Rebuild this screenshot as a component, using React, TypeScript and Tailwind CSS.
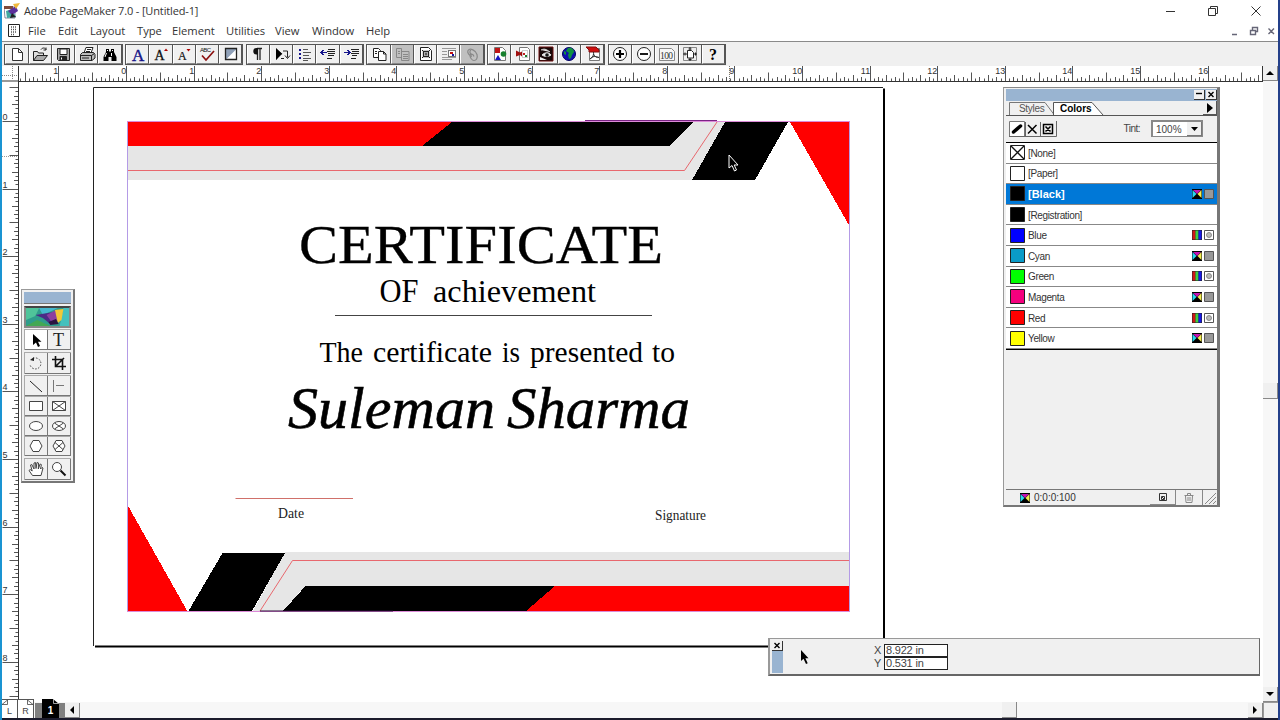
import type { ReactNode } from "react";

const INCH = 67.6;

const MENUS = [
  { label: "File", w: "w-[30px]" },
  { label: "Edit", w: "w-[32px]" },
  { label: "Layout", w: "w-[47px]" },
  { label: "Type", w: "w-[35px]" },
  { label: "Element", w: "w-[54px]" },
  { label: "Utilities", w: "w-[49px]" },
  { label: "View", w: "w-[37px]" },
  { label: "Window", w: "w-[54px]" },
  { label: "Help", w: "w-[40px]" },
];

type Swatch = { name: string; fill: string; model?: "rgb" | "cmyk"; selected?: boolean };

const SWATCHES: Swatch[] = [
  { name: "[None]", fill: "none" },
  { name: "[Paper]", fill: "#ffffff" },
  { name: "[Black]", fill: "#000000", model: "cmyk", selected: true },
  { name: "[Registration]", fill: "#000000" },
  { name: "Blue", fill: "#0000ff", model: "rgb" },
  { name: "Cyan", fill: "#0a9bc8", model: "cmyk" },
  { name: "Green", fill: "#00ff00", model: "rgb" },
  { name: "Magenta", fill: "#f5007d", model: "cmyk" },
  { name: "Red", fill: "#ff0000", model: "rgb" },
  { name: "Yellow", fill: "#ffff00", model: "cmyk" },
];

function Icon({ children, crisp = false }: { children: ReactNode; crisp?: boolean }) {
  return (
    <svg width="18" height="18" viewBox="0 0 18 18" className="shrink-0" fill="none" stroke="#222" strokeWidth="1" shapeRendering={crisp ? "crispEdges" : "auto"}>
      {children}
    </svg>
  );
}

const serif = { fontFamily: "Liberation Serif, serif" };

const TOOLBAR: { icon: ReactNode; off?: boolean }[][] = [
  [
    { icon: <Icon><path d="M4.5 3.5h6l4 4v8h-10zM10.5 3.5v4h4" fill="#fff" stroke="#333" /></Icon> },
    {
      icon: (
        <Icon>
          <path d="M2.5 15.5v-9h4l1 1.500h5v2.500" fill="#ddd" />
          <path d="M2.500 15.500l3.500-5h10.500l-4 5z" fill="#aaa" />
          <path d="M10 4.500c1.500-2 4-2 5 0m0-2v2.500h-2.500" />
        </Icon>
      ),
    },
    {
      icon: (
        <Icon>
          <path d="M3.500 3.500h12v12h-11l-1-1z" fill="#aaa" />
          <path d="M6 4h7v5.500H6z" fill="#fff" />
          <path d="M6 11.500h6.500v4H6z" fill="#222" />
          <path d="M7.500 12.500v2" stroke="#fff" />
        </Icon>
      ),
    },
    {
      icon: (
        <Icon>
          <path d="M6 8l2-5.500h7L13 8" fill="#fff" />
          <path d="M2.500 9.500l2-2h11l1.500 2v3.500l-3 2.500h-11.500z" fill="#bbb" />
          <path d="M2.500 10.500h11v5M13.500 10.500l3-2M4 13h7M9 4.500h4M8 6.500h4" />
        </Icon>
      ),
    },
    {
      icon: (
        <Icon>
          <path d="M5 4h3v2l1 1 1-1V4h3v3l2.500 5v4h-5v-4h-3v4h-5v-4L5 7z" fill="#000" stroke="none" />
          <path d="M5.500 8l-1.500 4M10.500 8v3M6 5.500h1M11 5.500h1" stroke="#fff" />
        </Icon>
      ),
    },
  ],
  [
    { icon: <Icon><text x="3" y="15.500" fontSize="17" fill="#141488" stroke="#141488" strokeWidth=".4" style={serif}>A</text></Icon> },
    { icon: <Icon><text x="2.500" y="15" fontSize="14" fill="#111" stroke="#111" strokeWidth=".3" style={serif}>A</text><path d="M12 6h4l-2-2.500z" fill="#a00" stroke="none" /></Icon> },
    { icon: <Icon><text x="3" y="15" fontSize="12" fill="#111" stroke="#111" strokeWidth=".2" style={serif}>A</text><path d="M11.500 4h4l-2 2.500z" fill="#a00" stroke="none" /></Icon> },
    {
      icon: (
        <Icon>
          <text x="2" y="6.500" fontSize="6" fill="#111" stroke="none" textLength="11" style={{ fontFamily: "Liberation Sans, sans-serif" }}>ABC</text>
          <path d="M4 10.500l4 4.500 8-9" stroke="#8b1010" strokeWidth="1.700" />
        </Icon>
      ),
    },
    {
      icon: (
        <Icon>
          <path d="M3.500 3.500h11v11h-11z" fill="#fff" />
          <path d="M4 4h10.500L4 14.500z" fill="#8fa0b8" stroke="none" />
          <path d="M3.500 3.500h11v11h-11z" strokeWidth="1.300" />
        </Icon>
      ),
    },
  ],
  [
    { icon: <Icon><path d="M8.500 3v12M11 3v12M8 3.500h5" strokeWidth="1.300" /><path d="M9 3H7.500a3.200 3.200 0 0 0 0 6.400H9z" fill="#111" stroke="none" /></Icon> },
    {
      icon: (
        <Icon>
          <path d="M3 3.500v11.500l1.500-2V10l5-1z" fill="#000" stroke="none" />
          <path d="M3 3v12l6-6z" fill="#000" stroke="none" />
          <path d="M10 6h4.500v6.500M12 10.500l2.500 3 2.500-3M8 13.500h3" />
        </Icon>
      ),
    },
    {
      icon: (
        <Icon crisp>
          <path d="M7 4.500h5M7 7.500h8M7 10.500h6M7 13.500h8M7 15.500h5" stroke="#555" />
          <path d="M3 4.500h2M3 8.500h2M3 12.500h2" stroke="#14148c" strokeWidth="2" />
        </Icon>
      ),
    },
    {
      icon: (
        <Icon crisp>
          <path d="M9 4.500h7M8 6.500h8M9 8.500h7M9 10.500h6M8 13.500h5" stroke="#222" />
          <path d="M8 7.500H2M5 5L2 7.500 5 10" stroke="#14148c" strokeWidth="1.300" />
        </Icon>
      ),
    },
    {
      icon: (
        <Icon crisp>
          <path d="M9 4.500h8M10 6.500h7M9 8.500h8M10 10.500h5M9 13.500h5" stroke="#222" />
          <path d="M2 7.500h6M5 5l3 2.500L5 10" stroke="#14148c" strokeWidth="1.300" />
        </Icon>
      ),
    },
  ],
  [
    {
      icon: (
        <Icon>
          <path d="M3.500 3.500h5l2 2v7h-7z" fill="#fff" />
          <path d="M8.500 6.500h5l2.500 2.500v6.500h-7.500z" fill="#fff" />
          <path d="M5 6.500h2M5 8.500h2M13.500 6.500v2.500h2.500" />
        </Icon>
      ),
    },
    {
      off: true,
      icon: (
        <Icon>
          <path d="M3.500 3.500h5v9h-5zM8.500 6.500h7.500v9h-7.500z" stroke="#888" />
          <path d="M5 6.500h2M5 8.500h2M10 9.500h5M10 11.500h5M10 13.500h5" stroke="#888" />
        </Icon>
      ),
    },
    {
      icon: (
        <Icon>
          <path d="M3.500 2.500h8l3 3v10h-11z" fill="#fff" />
          <path d="M6.500 6.500h5v5h-5z" strokeWidth="1.300" />
          <path d="M5 5l1.500 1.500M13 5l-1.500 1.500M5 13l1.500-1.500M13 13l-1.500-1.500" />
          <circle cx="9" cy="9" r="1" />
        </Icon>
      ),
    },
    {
      icon: (
        <Icon crisp>
          <path d="M2 3.500h14M2 6.500h5M2 9.500h5M2 12.500h14M2 14.500h10" stroke="#999" />
          <path d="M8.500 5.500h7v6h-7z" fill="#fff" stroke="#777" />
          <path d="M10 7h3v2h-3z" fill="#c01010" stroke="none" />
          <path d="M12 9h2v2h-2z" fill="#1414a0" stroke="none" />
        </Icon>
      ),
    },
    {
      off: true,
      icon: (
        <Icon>
          <path d="M5 5.500c2-3 8 0 9 4s-1 6-3 6-4-3-4-5 3-2 4 1M5 5.500c-1 2 1 5 4 6M8 5c-2 1-1 4 1 5" stroke="#888" strokeWidth="1.200" />
        </Icon>
      ),
    },
  ],
  [
    {
      icon: (
        <Icon>
          <path d="M3.500 2.500h8l3 3v10h-11z" fill="#fff" stroke="#777" />
          <path d="M4 3h5v5H4z" fill="#c01515" stroke="none" />
          <circle cx="12.500" cy="9" r="2.800" fill="#188030" stroke="none" />
          <path d="M4 15l3-5 3 5z" fill="#1515c0" stroke="none" />
        </Icon>
      ),
    },
    {
      icon: (
        <Icon>
          <path d="M5.500 2.500h8l2 2v11h-10z" fill="#fff" stroke="#777" />
          <path d="M2 5.500l4 2 2-1v5l-2-1.500-4 1.500z" fill="#a01010" stroke="none" />
          <path d="M9 8h2v2H9z" fill="#c02020" stroke="none" />
          <path d="M11 10h2v2h-2z" fill="#188030" stroke="none" />
          <path d="M8.500 5.500h5v7h-5z" stroke="#999" strokeDasharray="1 1" />
        </Icon>
      ),
    },
    {
      icon: (
        <Icon>
          <path d="M2 2h14v14H2z" fill="#180808" stroke="#6e1010" />
          <path d="M4 5c4-2 6 0 9 2M5 10c3-3 7-3 9 0-3 2-6 2-9 0z" stroke="#ddd" fill="#eee" />
          <circle cx="10" cy="10" r="1.800" fill="#111" stroke="none" />
          <path d="M3 12l7 3H3z" fill="#eee" stroke="none" />
        </Icon>
      ),
    },
    {
      icon: (
        <Icon>
          <circle cx="9" cy="9" r="6.500" fill="#1010b0" stroke="#000060" />
          <path d="M8 3c4-1 6 2 6 4l-2 3-1 3-2 1-1-4 1-2-3-2zM4 6l2 1v3l-2-1z" fill="#109040" stroke="none" />
        </Icon>
      ),
    },
    {
      icon: (
        <Icon>
          <path d="M5.500 3.500h10v12h-10z" fill="#fff" stroke="#777" />
          <path d="M2 2h10l3 3v2H5V5z" fill="#d01010" stroke="#801010" />
          <path d="M6 14c3-1 4-5 3.500-7M9.500 9c1 3 4 4 5.500 3.500M6 14c2-3 6-3 9-1.500" stroke="#333" />
        </Icon>
      ),
    },
  ],
  [
    { icon: <Icon><circle cx="9" cy="9" r="6.500" fill="#fff" /><path d="M9 5v8M5 9h8" stroke="#000" strokeWidth="2.200" /></Icon> },
    { icon: <Icon><circle cx="9" cy="9" r="6.500" fill="#fff" /><path d="M5 9h8" stroke="#000" strokeWidth="1.800" /></Icon> },
    {
      icon: (
        <Icon>
          <path d="M1.500 15.500v-12h12l3 3v9z" fill="#f7f7f7" stroke="#888" />
          <text x="2" y="13.500" fontSize="9.500" fill="#333" stroke="none" textLength="13" style={serif}>100</text>
        </Icon>
      ),
    },
    {
      icon: (
        <Icon>
          <path d="M2.500 2.500h13v13h-13z" fill="#eee" stroke="#888" />
          <path d="M6.500 5.500h4l2 2v5.500h-6z" fill="#fff" />
          <path d="M9 2v3M9 13v3M2 9h4M13 9h3M7.500 4h3M7.500 14.500h3M4 7.500v3M14.500 7.500v3" />
        </Icon>
      ),
    },
    { icon: <Icon><text x="5" y="15" fontSize="16" fontWeight="700" fill="#000" stroke="none" style={serif}>?</text></Icon> },
  ],
];

function Toolbar() {
  return (
    <div className="flex h-[25px] shrink-0 items-start gap-[2.4px] border-t border-[#8a8a8a] bg-[#f0f0f0] pt-[2px] pl-[2.300px]">
      {TOOLBAR.map((group, g) => (
        <div key={g} className="flex h-[21px] w-[118.3px] border border-[#555] bg-[#555]">
          {group.map((b, i) => (
            <div
              key={i}
              className={`flex min-w-0 flex-1 items-center justify-center overflow-hidden border-r border-b border-l border-r-[#555] border-b-[#888] border-l-white ${b.off ? "bg-[#c0c0c0]" : "bg-[#f0f0f0]"}`}
            >
              {b.icon}
            </div>
          ))}
        </div>
      ))}
    </div>
  );
}

// Tick length for the n-th sixteenth of an inch
function tickSize(n: number) {
  if (n % 16 === 0) return 16;
  if (n % 8 === 0) return 9;
  if (n % 4 === 0) return 6.5;
  if (n % 2 === 0) return 4.5;
  return 3;
}

function ticks(from: number, to: number, zero: number) {
  const out: { pos: number; n: number }[] = [];
  const step = INCH / 16;
  for (let n = Math.ceil((from - zero) / step); zero + n * step < to; n++) {
    out.push({ pos: Math.round(zero + n * step) + 0.5, n });
  }
  return out;
}

const rulerFont = { fontFamily: "Liberation Sans, sans-serif", fontSize: "9px" };

function TopRuler() {
  return (
    <svg className="shrink-0" width="1245" height="16" viewBox="18 66 1245 16">
      {ticks(20, 1262, 126).map(({ pos, n }) => (
        <path key={n} d={`M${pos} 81.500v-${tickSize(n)}`} stroke="#555" />
      ))}
      {ticks(20, 1262, 126)
        .filter(({ n }) => n % 16 === 0)
        .map(({ pos, n }) => (
          <text key={n} x={pos - 0.3} y="74" textAnchor="end" fill="#333" style={rulerFont}>{Math.abs(n / 16)}</text>
        ))}
      <path d="M18 81.500h1245M18.500 66v16M1262.500 66v16" stroke="#333" />
      <path d="M729.500 66v16" stroke="#777" strokeDasharray="1 1" />
    </svg>
  );
}

function SideRuler() {
  return (
    <svg className="shrink-0" width="17" height="620" viewBox="2 82 17 620">
      {ticks(84, 700, 121).map(({ pos, n }) => (
        <path key={n} d={`M18.500 ${pos}h-${tickSize(n)}`} stroke="#555" />
      ))}
      {ticks(84, 700, 121)
        .filter(({ n }) => n % 16 === 0)
        .map(({ pos, n }) => (
          <text key={n} x="2.500" y={pos - 1.5} fill="#333" style={rulerFont}>{Math.abs(n / 16)}</text>
        ))}
      <path d="M18.500 82v620" stroke="#333" />
      <path d="M2 156.500h16" stroke="#999" strokeDasharray="1 1" />
    </svg>
  );
}

function Certificate() {
  return (
    <svg width="1244" height="620" viewBox="19 82 1244 620" style={serif}>
      <path d="M93.500 646V87.500H883" fill="none" stroke="#222" />
      <path d="M95 646.500H884V88.500" fill="none" stroke="#000" strokeWidth="2" />
      <g shapeRendering="crispEdges">
        <path d="M127 146H670L693 122H725L692 180H127z" fill="#e6e6e6" />
        <path d="M127 122H452L422 146H127z" fill="#f00" />
        <path d="M452 122H693L670 146H422z" fill="#000" />
        <path d="M725 122H788L755 180H692z" fill="#000" />
        <path d="M790 122H850V227z" fill="#f00" />
        <path d="M127 504L187 610.500H127z" fill="#f00" />
        <path d="M285 552H850V586H305L283 611H253z" fill="#e6e6e6" />
        <path d="M222.500 553H285L252 611H188.500z" fill="#000" />
        <path d="M305.500 586H555L526 611H283z" fill="#000" />
        <path d="M555 586H850V611H526z" fill="#f00" />
      </g>
      <path d="M127 170.500H684.500L717 122" fill="none" stroke="#e8686e" />
      <path d="M850 560.500H292.500L260 611" fill="none" stroke="#e8686e" />
      <path d="M127.500 121V612M849.500 121V612" stroke="#b49be6" />
      <path d="M127 121.500H850M127 611.500H850" stroke="#dc8ad8" />
      <path d="M585 120.500H717" stroke="#7b2485" />
      <path d="M260 611H393" stroke="#2a0b38" />
      <text x="299" y="263" fontSize="54" textLength="364" lengthAdjust="spacingAndGlyphs" stroke="#000" strokeWidth=".3">CERTIFICATE</text>
      <text x="379.500" y="301.500" fontSize="33" textLength="39" lengthAdjust="spacingAndGlyphs">OF</text>
      <text x="433" y="301.500" fontSize="32" textLength="163" lengthAdjust="spacingAndGlyphs">achievement</text>
      <path d="M335 315.500H652" stroke="#444" />
      <g fontSize="29.500">
        <text x="319.500" y="362" textLength="43.500" lengthAdjust="spacingAndGlyphs">The</text>
        <text x="373" y="362" textLength="119" lengthAdjust="spacingAndGlyphs">certificate</text>
        <text x="502" y="362" textLength="18" lengthAdjust="spacingAndGlyphs">is</text>
        <text x="530" y="362" textLength="113" lengthAdjust="spacingAndGlyphs">presented</text>
        <text x="652" y="362" textLength="23" lengthAdjust="spacingAndGlyphs">to</text>
      </g>
      <g fontSize="59" fontStyle="italic" stroke="#000" strokeWidth=".6">
        <text x="288" y="428" textLength="207" lengthAdjust="spacingAndGlyphs">Suleman</text>
        <text x="507" y="428" textLength="183" lengthAdjust="spacingAndGlyphs">Sharma</text>
      </g>
      <path d="M235.500 498.500H353" stroke="#d0706a" />
      <text x="278" y="518" fontSize="14.500" fill="#222" textLength="26" lengthAdjust="spacingAndGlyphs">Date</text>
      <text x="655" y="520" fontSize="14.500" fill="#222" textLength="51" lengthAdjust="spacingAndGlyphs">Signature</text>
      <path d="M729 155v13l3-2.500 2.500 5.500 2-1-2.300-5H738z" fill="#000" stroke="#fff" />
    </svg>
  );
}

function ScrollButton({ d }: { d: string }) {
  return (
    <div className="flex h-[15px] w-[15px] shrink-0 items-center justify-center border-r border-b border-[#888] bg-[#f0f0f0]">
      <svg width="8" height="8" viewBox="0 0 8 8"><path d={d} fill="#000" /></svg>
    </div>
  );
}

function VerticalScroll() {
  return (
    <div className="flex w-[15px] shrink-0 flex-col bg-[#f7f7f7]">
      <ScrollButton d="M0 6h8L4 2z" />
      <div className="flex-1 pt-[302px]">
        <div className="h-[16px] border-r border-b border-[#888] bg-[#f0f0f0]" />
      </div>
      <ScrollButton d="M0 2h8L4 6z" />
    </div>
  );
}

function PageTab({ label, flip = false }: { label: string; flip?: boolean }) {
  return (
    <div className="flex h-[19px] w-[16px] flex-col items-center border-t border-r border-[#555] bg-white">
      <svg width="15" height="5" viewBox="0 0 15 5" className="shrink-0">
        <path d={flip ? "M9.500 0v4.500h5.500L9.500 0" : "M5.500 0v4.500H0L5.500 0"} fill="#fff" stroke="#444" strokeWidth=".8" />
      </svg>
      <span className="text-[9px] leading-[12px] text-[#444]">{label}</span>
    </div>
  );
}

function BottomBar() {
  return (
    <div className="flex h-[16px] shrink-0 items-end bg-[#f7f7f7]">
      <PageTab label="L" />
      <PageTab label="R" flip />
      <div className="ml-px h-[15px] w-[7px] bg-[#808080]" />
      <div className="flex h-[19px] w-[17px] flex-col items-center bg-black">
        <svg width="17" height="5" viewBox="0 0 17 5" className="shrink-0">
          <path d="M11 0h6v5z" fill="#fff" />
          <path d="M11.500 0v4.500H16" fill="none" stroke="#ccc" strokeWidth=".8" />
        </svg>
        <span className="text-[10px] leading-[13px] font-bold text-white">1</span>
      </div>
      <div className="h-[15px] w-[6px] bg-[#808080]" />
      <ScrollButton d="M6 0v8L2 4z" />
      <div className="h-full flex-1 pl-[922px]">
        <div className="h-[16px] w-[15px] border-r border-b border-[#888] bg-[#f0f0f0]" />
      </div>
      <ScrollButton d="M2 0v8L6 4z" />
      <div className="h-[16px] w-[15px] border-t border-l border-[#999] bg-[#f0f0f0]" />
    </div>
  );
}

function Tool({ children, active = false }: { children: ReactNode; active?: boolean }) {
  return (
    <div
      className={`flex flex-1 items-center justify-center border-r border-b border-[#777] ${active ? "bg-white" : "bg-[#f0f0f0]"}`}
    >
      <svg width="18" height="18" viewBox="0 0 18 18" fill="none" stroke="#444" strokeWidth="1">{children}</svg>
    </div>
  );
}

function ToolRow({ children, h }: { children: ReactNode; h: string }) {
  return <div className={`flex shrink-0 border-t border-l border-[#aaa] ${h}`}>{children}</div>;
}

function Toolbox() {
  return (
    <div className="absolute top-[289px] left-[19px] flex h-[194px] w-[54px] flex-col border-t border-r-2 border-b-2 border-l border-[#777] border-t-[#999] border-l-[#999] bg-[#f0f0f0] px-[2px] pt-[2px]">
      <div className="h-[12px] shrink-0 border-b border-[#777] bg-[#99b4d1]" />
      <div className="mt-[2px] flex h-[22px] shrink-0 border-2 border-[#888] border-t-[#444] bg-white">
        <svg width="46" height="18" viewBox="0 0 46 18" preserveAspectRatio="none" className="min-w-0 flex-1">
          <path d="M0 0h46v18H0z" fill="#2f9c8c" />
          <path d="M0 0h14l-4 8-10 4z" fill="#4fc49a" />
          <path d="M14 0h20L18 7z" fill="#46b8cf" />
          <path d="M0 18l12-6 14 6z" fill="#43a853" />
          <path d="M40 0h6v18h-10z" fill="#45c0bd" />
          <path d="M10 7l20-3 4 9-8 3-8-6z" fill="#4b2a86" />
          <path d="M22 7l10-5 5 8-9 5z" fill="#8b3fa0" />
          <path d="M31 2l9-1-2 11-4 3z" fill="#f2c838" />
          <path d="M24 14l8-3 3 5-9 1z" fill="#2a1440" />
        </svg>
      </div>
      <div className="h-px shrink-0" />
      <ToolRow h="h-[21px]">
        <Tool active><path d="M6 3v11l3-2.500 2 4.500 2-1-2-4.200h3.500z" fill="#000" stroke="none" /></Tool>
        <Tool><text x="3" y="15" fontSize="18" fill="#222" stroke="none" style={serif}>T</text></Tool>
      </ToolRow>
      <div className="h-[2px] shrink-0" />
      <ToolRow h="h-[22px]">
        <Tool><path d="M6 4.500a5.500 5.500 0 1 1-3 6" strokeDasharray="1.500 1.500" /><path d="M3 6l4-3v4z" fill="#222" stroke="none" /></Tool>
        <Tool><path d="M5.500 2v10.500H16M2 5.500h10.500V16M6 12l8-8" stroke="#111" strokeWidth="1.600" /></Tool>
      </ToolRow>
      <div className="h-px shrink-0" />
      <ToolRow h="h-[21px]">
        <Tool><path d="M3 4l12 11" stroke="#222" /></Tool>
        <Tool><path d="M3.500 3v12M6 8.500h8" stroke="#777" /></Tool>
      </ToolRow>
      <ToolRow h="h-[20px]">
        <Tool><path d="M2.500 4.500h13v9h-13z" fill="#fff" /></Tool>
        <Tool><path d="M2.500 4.500h13v9h-13zl13 9M15.500 4.500l-13 9" fill="#fff" /></Tool>
      </ToolRow>
      <ToolRow h="h-[20px]">
        <Tool><ellipse cx="9" cy="9" rx="6.500" ry="4.500" fill="#fff" /></Tool>
        <Tool><ellipse cx="9" cy="9" rx="6.500" ry="4.500" fill="#fff" /><path d="M4.500 6l9 6M13.500 6l-9 6" /></Tool>
      </ToolRow>
      <ToolRow h="h-[20px]">
        <Tool><path d="M6 3.500h6l3 5.500-3 5.500H6L3 9z" fill="#fff" /></Tool>
        <Tool><path d="M6 3.500h6l3 5.500-3 5.500H6L3 9zM5 5.500l8 7M13 5.500l-8 7" fill="#fff" /></Tool>
      </ToolRow>
      <div className="h-[2px] shrink-0" />
      <ToolRow h="h-[22px]">
        <Tool>
          <path d="M5.500 15.500L2 10.500l1.200-1 2 1.500L3.500 5l1.300-.5L7 9V3l1.500-.5.5 6 1-6 1.500.500L11.300 9l1.800-5 1.300.600L13.500 9l1.500-1.500 1 .500-2 7.500z" fill="#fff" />
        </Tool>
        <Tool><circle cx="7" cy="7" r="4.500" fill="#fff" /><path d="M10.500 10.500l5 5" stroke="#111" strokeWidth="2" /></Tool>
      </ToolRow>
    </div>
  );
}

function CmykIcon() {
  return (
    <svg width="10" height="10" viewBox="0 0 10 10" className="shrink-0">
      <path d="M0 0h10v10H0z" fill="#000" />
      <path d="M1 1h8L5 5z" fill="#c414b4" />
      <path d="M.5 1v8l4-4z" fill="#28d8f0" />
      <path d="M9.500 1v8l-4-4z" fill="#f5ee50" />
    </svg>
  );
}

function RgbIcon() {
  return (
    <svg width="10" height="10" viewBox="0 0 10 10" className="shrink-0">
      <path d="M0 0h10v10H0z" fill="#222" />
      <path d="M.5.5h3v9h-3z" fill="#d01818" />
      <path d="M3.500.5h3v9h-3z" fill="#40d040" />
      <path d="M6.500.5h3v9h-3z" fill="#1818e8" />
    </svg>
  );
}

function SwatchRow({ s }: { s: Swatch }) {
  return (
    <div
      className={`flex h-[20.6px] items-center border-b border-[#888] px-[3px] ${s.selected ? "bg-[#0078d7] font-bold text-white" : "bg-white text-[#333]"}`}
    >
      <svg width="16" height="16" viewBox="0 0 16 16" className="-mt-px shrink-0">
        <path d="M1.500 1.500h14v14h-14z" fill={s.fill} stroke="#222" />
        {s.fill === "none" && <path d="M2 2l13 13M15 2L2 15" stroke="#111" strokeWidth="1.300" />}
      </svg>
      <span className={`ml-[3px] flex-1 pt-px ${s.selected ? "text-[11px]" : "text-[10px] tracking-[-0.35px]"}`}>{s.name}</span>
      {s.model && (
        <div className="flex gap-[2px]">
          {s.model === "cmyk" ? <CmykIcon /> : <RgbIcon />}
          <svg width="10" height="10" viewBox="0 0 10 10" className="shrink-0">
            <path d="M.5.5h9v9h-9z" fill={s.model === "cmyk" ? "#999" : "#fff"} stroke="#555" />
            {s.model === "rgb" && <circle cx="5" cy="5" r="2.500" fill="#bbb" stroke="#777" strokeWidth=".8" />}
          </svg>
        </div>
      )}
    </div>
  );
}

function CaptionButton({ d }: { d: string }) {
  return (
    <div className="h-[10px] w-[11px] border-r border-b border-[#333] bg-[#f0f0f0]">
      <svg width="10" height="9" viewBox="0 0 10 9"><path d={d} stroke="#000" strokeWidth="1.400" /></svg>
    </div>
  );
}

function ColorsPalette() {
  return (
    <div className="absolute top-[87px] left-[1001px] flex h-[420px] w-[217px] flex-col border-t border-r-[3px] border-b-2 border-l border-[#777] border-t-[#888] border-l-[#999] bg-[#f0f0f0] pt-px pl-[2px]">
      <div className="flex h-[12px] shrink-0 items-center justify-end gap-px bg-[#99b4d1]">
        <CaptionButton d="M2 3.500h6" />
        <CaptionButton d="M2.500 2l5 5M7.500 2l-5 5" />
      </div>
      <div className="flex h-[15px] shrink-0 items-end border-b border-[#555]">
        <div className="relative flex h-[14px] w-[100px]">
          <svg width="100" height="14" viewBox="0 0 100 14" className="absolute inset-0">
            <path d="M3.500 14V1.500H39L48 13.500" fill="#f0f0f0" stroke="#777" />
            <path d="M47.500 14V1.500H86L97 14" fill="#fff" stroke="#555" />
          </svg>
          <span className="relative w-[51px] pl-[13px] text-[10px] leading-[16px] tracking-[-0.3px] text-[#555]">Styles</span>
          <span className="relative pl-[3px] text-[10px] leading-[16px] font-bold">Colors</span>
        </div>
        <div className="ml-auto flex h-[14px] w-[14px] items-center justify-center border-r border-b border-[#555]">
          <svg width="8" height="10" viewBox="0 0 8 10"><path d="M1 0l6 5-6 5z" /></svg>
        </div>
      </div>
      <div className="flex h-[27px] shrink-0 items-center border-b border-black pr-[14px] pb-px pl-[3px] text-[10px] text-[#444]">
        <svg width="48" height="18" viewBox="0 0 48 18">
          <path d="M0 1h48v16H0z" fill="#f0f0f0" />
          <path d="M.500 1.500h15v15H.500z" fill="#fff" stroke="#777" />
          <path d="M4.500 12l7-6" stroke="#000" strokeWidth="3.500" strokeLinecap="round" />
          <path d="M19 5l8.500 8.500M27.500 5L19 13.500" stroke="#000" strokeWidth="1.500" />
          <path d="M34.500 4.500h9v9h-9zM36.500 6.500l5 5M41.500 6.500l-5 5" fill="none" stroke="#000" strokeWidth="1.500" />
          <path d="M0 16.500h47.500V1M31.500 2v14M16.500 2v14" fill="none" stroke="#666" />
        </svg>
        <span className="ml-auto tracking-[-0.5px]">Tint:</span>
        <div className="ml-[11px] flex h-[17px] w-[52px] items-center border-t-2 border-l-2 border-r border-b border-[#888] bg-white pl-[3px]">
          <span>100%</span>
          <div className="ml-auto flex h-full w-[15px] items-center justify-center border-r border-b border-[#777] bg-[#f0f0f0]">
            <svg width="7" height="4" viewBox="0 0 7 4"><path d="M0 0h7L3.500 4z" /></svg>
          </div>
        </div>
      </div>
      <div className="shrink-0 border-b border-black">
        {SWATCHES.map((s) => (
          <SwatchRow key={s.name} s={s} />
        ))}
      </div>
      <div className="flex-1" />
      <div className="flex h-[16px] shrink-0 items-center border-t border-[#777] pl-[14px]">
        <CmykIcon />
        <span className="ml-[4px] text-[10px] text-[#333]">0:0:0:100</span>
        <div className="ml-auto flex h-full w-[26px] items-center justify-center border-r border-b border-[#888]">
          <svg width="10" height="10" viewBox="0 0 10 10" fill="none" stroke="#333"><path d="M1.500 1.500h7v7h-7zM3.500 4.500h3v3h-3zM4 5l2 2" /></svg>
        </div>
        <div className="flex h-full w-[27px] items-center justify-center border-r border-[#888]">
          <svg width="10" height="10" viewBox="0 0 10 10" fill="none" stroke="#888"><path d="M.5 2.500h9M3.500 2V.5h3V2M1.500 3l.500 6.500h6l.500-6.500M4 4v4M6 4v4" /></svg>
        </div>
        <svg width="14" height="14" viewBox="0 0 14 14" stroke="#888"><path d="M2 13L13 2M6 13l7-7M10 13l3-3" /></svg>
      </div>
    </div>
  );
}

function ControlPalette() {
  return (
    <div className="absolute top-[638px] left-[766px] flex h-[38px] w-[492px] items-start border-t border-r border-b-2 border-l-2 border-[#666] border-t-[#999] border-l-[#999] bg-[#f0f0f0] pt-[2px] pl-[2px]">
      <div className="h-[32px] w-[11px] bg-[#99b4d1]">
        <CaptionButton d="M2.500 2l5 5M7.500 2l-5 5" />
      </div>
      <svg className="mt-[8px] ml-[17px]" width="10" height="16" viewBox="0 0 10 16">
        <path d="M1 1v11l2.500-2.300L6 15l1.700-.8-2.300-5H8.500z" />
      </svg>
      <div className="mt-[3px] ml-[64px] flex w-[74px] flex-col text-[11px] leading-[11px] tracking-[-0.2px] text-[#444]">
        <div className="flex h-[13px] items-center">
          <span className="w-[10px]">X</span>
          <span className="h-[13px] flex-1 border border-[#222] bg-white pl-px">8.922 in</span>
        </div>
        <div className="flex h-[13px] items-center">
          <span className="w-[10px]">Y</span>
          <span className="h-[13px] flex-1 border border-[#222] bg-white pl-px">0.531 in</span>
        </div>
      </div>
    </div>
  );
}

function TitleBar() {
  return (
    <div className="flex h-[22px] shrink-0 items-center bg-white pr-[17px] pl-[2px] font-['Open_Sans',sans-serif] text-[11px] text-[#333]">
      <svg width="16" height="16" viewBox="0 0 16 16">
        <path d="M0 4h11v11H1z" fill="#fff" stroke="#557" strokeWidth=".7" />
        <path d="M0 3h9v3H0z" fill="#7d4a3c" />
        <path d="M2 8l6-2 4 8-9 1z" fill="#44a8a0" />
        <path d="M4 8l8-5 2 5-6 4z" fill="#5b2f9c" />
        <path d="M9 1l7-1-4 6z" fill="#f0b83c" />
        <path d="M8 10l4 4-6 1z" fill="#222" />
      </svg>
      <span className="ml-[4px] pt-px tracking-[-0.14px]">Adobe PageMaker 7.0 - [Untitled-1]</span>
      <svg className="mb-px ml-auto" width="96" height="12" viewBox="0 0 96 12" fill="none" stroke="#333">
        <path d="M1 6.500h9M43.500 3.500h7v7h-7zM45.500 3V1.500h7v7H51M86.500 1.500l9 9M95.500 1.500l-9 9" />
      </svg>
    </div>
  );
}

function MenuBar() {
  return (
    <div className="flex h-[19px] shrink-0 items-center bg-white pr-[3px] pb-[2px] pl-[5px] font-['Open_Sans',sans-serif] text-[11.2px] leading-[16px] text-[#333]">
      <svg className="mr-[7px] shrink-0" width="14" height="15" viewBox="0 0 14 15">
        <path d="M1.500 1.500h11v12h-11z" fill="#fff" stroke="#222" />
        <path d="M4 4h6M4 6.500h6M4 9h6M4 11.500h3" stroke="#555" strokeDasharray="1 1" strokeWidth="1.500" />
      </svg>
      {MENUS.map((m) => (
        <span key={m.label} className={`shrink-0 whitespace-nowrap ${m.w}`}>{m.label}</span>
      ))}
      <svg className="ml-auto" width="48" height="14" viewBox="0 0 48 14" fill="none" stroke="#667" strokeWidth="1.400">
        <path d="M5 10.500h5M23.500 6.500h5v4h-5zM25.500 6V3.500h5v4h-1.500M41.500 4.500l5.500 5.500M47 4.500L41.500 10" />
      </svg>
    </div>
  );
}

export default function App() {
  return (
    <div className="relative flex h-[720px] w-[1280px] flex-col overflow-hidden border-r-2 border-l-2 border-r-[#24408a] border-l-[#1a94d2] bg-white font-['Liberation_Sans',sans-serif]">
      <TitleBar />
      <MenuBar />
      <Toolbar />
      <div className="flex h-[636px] shrink-0">
        <div className="flex min-w-0 flex-1 flex-col">
          <div className="flex h-[16px] shrink-0">
            <svg className="shrink-0" width="16" height="16" viewBox="0 0 16 16">
              <path d="M10.500 0v15M0 9.500h16" stroke="#888" strokeDasharray="1 1" />
              <path d="M0 15h16" stroke="#999" strokeWidth="2" />
            </svg>
            <TopRuler />
          </div>
          <div className="flex min-h-0 flex-1">
            <SideRuler />
            <Certificate />
          </div>
        </div>
        <VerticalScroll />
      </div>
      <BottomBar />
      <div className="h-[2px] shrink-0 bg-[#1b1b2c]" />
      <Toolbox />
      <ColorsPalette />
      <ControlPalette />
    </div>
  );
}
